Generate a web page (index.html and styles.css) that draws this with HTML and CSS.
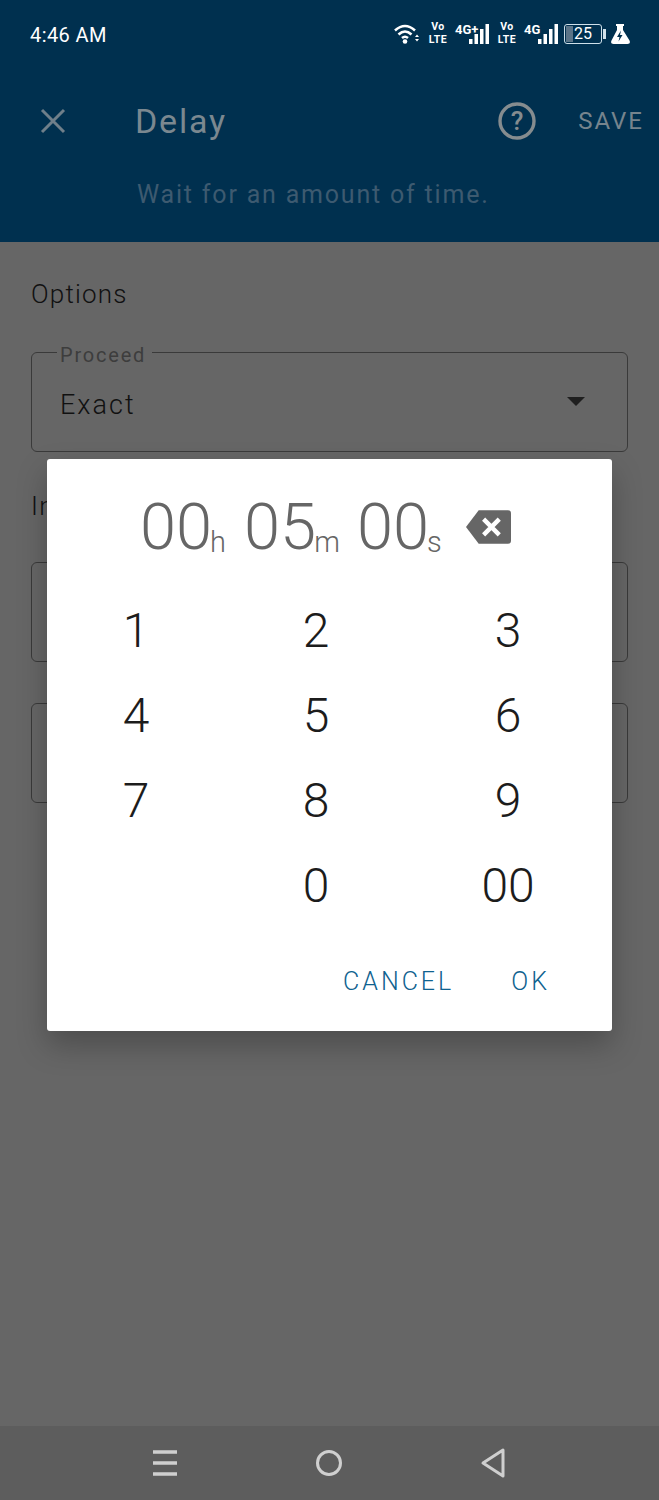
FILE: index.html
```html
<!DOCTYPE html>
<html lang="en">
<head>
  <meta charset="UTF-8" />
  <title>Delay</title>
  <link rel="stylesheet" href="styles.css">
</head>
<body>
  <div class="screen">
    <div class="appbar">
      <div class="status">
        <span class="clock">4:46 AM</span>
        <div class="status-icons">
          <svg width="26" height="20" viewBox="0 0 26 20"><g fill="none" stroke="#fff" stroke-width="2.600"><path d="M1 6.500 Q11 -2.500 21 6.500"/><path d="M4.500 10.500 Q11 4.500 17.500 10.500"/><path d="M8 14 Q11 11.500 14 14"/></g><circle cx="11" cy="17.500" r="2.300" fill="#fff"/><path d="M21 13h4l-2-2.500zM21 15h4l-2 2.500z" fill="#fff"/></svg>
          <span class="volte">Vo<br>LTE</span>
          <div class="net">
            <span class="net-label">4G+</span>
            <svg class="bars" width="20" height="20" viewBox="0 0 20 20"><path d="M0 15h3.500v5H0zM5.500 10H9v10H5.500zM11 5h3.500v15H11zM16.500 0H20v20h-3.500z" fill="#fff"/></svg>
          </div>
          <span class="volte">Vo<br>LTE</span>
          <div class="net">
            <span class="net-label">4G</span>
            <svg class="bars" width="20" height="20" viewBox="0 0 20 20"><path d="M0 15h3.500v5H0zM5.500 10H9v10H5.500zM11 5h3.500v15H11zM16.500 0H20v20h-3.500z" fill="#fff"/></svg>
          </div>
          <div class="battery"><span class="battery-level"></span><span class="battery-num">25</span></div>
          <span class="battery-tip"></span>
          <svg class="flask" width="20" height="20" viewBox="0 0 20 20"><path d="M6 0h8v2h-1v4l6.500 10.500q1.500 3.500-2 3.500H3.500q-3.500 0-2-3.500L7 6V2H6z" fill="#fff"/><path d="M11 6.500l-4 6.500h2.500l-1 4.500 4-6.500H10z" fill="#00304f"/></svg>
        </div>
      </div>
      <div class="toolbar">
        <svg class="close" width="28" height="28" viewBox="0 0 28 28"><path d="M3 3l22 22M25 3L3 25" stroke="#6f7f8a" stroke-width="3" fill="none"/></svg>
        <h1 class="title">Delay</h1>
        <svg class="help" width="40" height="40" viewBox="0 0 40 40"><circle cx="20" cy="20" r="17" fill="none" stroke="#858c8f" stroke-width="3.400"/><text x="20" y="29" text-anchor="middle" class="help-mark">?</text></svg>
        <span class="save">SAVE</span>
      </div>
      <p class="subtitle">Wait for an amount of time.</p>
    </div>

    <div class="content">
      <h2 class="section">Options</h2>
      <fieldset class="field field-first">
        <legend>Proceed</legend>
        <span class="field-value">Exact</span>
        <span class="caret"></span>
      </fieldset>
      <h2 class="section section-second">Input</h2>
      <fieldset class="field"></fieldset>
      <fieldset class="field field-last"></fieldset>
    </div>

    <div class="navbar">
      <svg width="28" height="28" viewBox="0 0 28 28"><path d="M2 3h24M2 14h24M2 25h24" stroke="#cfcfcf" stroke-width="3.400" fill="none"/></svg>
      <svg width="28" height="28" viewBox="0 0 28 28"><circle cx="14" cy="14" r="11.500" stroke="#cfcfcf" stroke-width="3" fill="none"/></svg>
      <svg width="28" height="32" viewBox="0 0 28 32"><path d="M24 3v26L4 16z" stroke="#cfcfcf" stroke-width="3" stroke-linejoin="round" fill="none"/></svg>
    </div>

    <div class="dialog">
      <div class="readout">
        <span class="digits">00</span><span class="unit unit-h">h</span>
        <span class="digits">05</span><span class="unit unit-m">m</span>
        <span class="digits">00</span><span class="unit unit-s">s</span>
        <svg class="backspace" width="45" height="34" viewBox="0 0 46 34"><path d="M13 0h30q3 0 3 3v28q0 3-3 3H13L0 17z" fill="#666"/><path d="M18 9l16 16M34 9L18 25" stroke="#fff" stroke-width="4.500" fill="none"/></svg>
      </div>
      <div class="keypad">
        <span class="key">1</span><span class="key">2</span><span class="key">3</span>
        <span class="key">4</span><span class="key">5</span><span class="key">6</span>
        <span class="key">7</span><span class="key">8</span><span class="key">9</span>
        <span class="key"></span><span class="key">0</span><span class="key">00</span>
      </div>
      <div class="actions">
        <span class="action">CANCEL</span>
        <span class="action">OK</span>
      </div>
    </div>
  </div>
</body>
</html>
```

FILE: styles.css
```css
html, body {
  margin: 0;
  padding: 0;
}
body {
  font-family: Roboto, "Liberation Sans", sans-serif;
  background-color: #666;
}
.screen {
  position: relative;
  display: flex;
  flex-direction: column;
  width: 659px;
  height: 1500px;
  overflow: hidden;
}

/* top area */
.appbar {
  height: 242px;
  flex-shrink: 0;
  background-color: #00304f;
  box-sizing: border-box;
}
.status {
  display: flex;
  justify-content: space-between;
  align-items: center;
  height: 68px;
  padding: 0 29px 0 30px;
  color: #fff;
}
.clock {
  margin-top: 1px;
  font-size: 20px;
  letter-spacing: 0.400px;
}
.status-icons {
  display: flex;
  align-items: center;
  gap: 7px;
  margin-top: -1px;
}
.volte {
  width: 20px;
  margin-left: 1px;
  font-size: 10.500px;
  line-height: 12.300px;
  font-weight: 700;
  letter-spacing: 0.500px;
  text-align: center;
}
.net {
  display: flex;
  align-items: flex-end;
  width: 34px;
}
.net-label {
  width: 14px;
  font-size: 13px;
  line-height: 12px;
  font-weight: 700;
  white-space: nowrap;
  align-self: flex-start;
}
.bars {
  margin-left: auto;
}
.battery {
  position: relative;
  box-sizing: border-box;
  width: 38px;
  height: 20px;
  margin-left: -1px;
  border: 1.500px solid #cfe0ea;
  border-radius: 3px;
  display: flex;
  align-items: center;
  justify-content: center;
}
.battery-level {
  position: absolute;
  left: 1px;
  top: 1px;
  bottom: 1px;
  width: 7px;
  background-color: #5b7488;
}
.battery-num {
  position: relative;
  font-size: 16px;
}
.battery-tip {
  width: 3px;
  height: 10px;
  margin-left: -6px;
  background-color: #cfe0ea;
}
.flask {
  margin-left: -3px;
}
.toolbar {
  display: flex;
  align-items: center;
  height: 50px;
  margin-top: 28px;
  padding-left: 39px;
}
.title {
  margin: 0 0 0 68px;
  flex: 1;
  font-size: 34px;
  font-weight: 400;
  letter-spacing: 1.800px;
  color: #7b8890;
}
.help-mark {
  font-family: Roboto, sans-serif;
  font-size: 26px;
  font-weight: 500;
  fill: #858c8f;
}
.save {
  margin: 0 15px 0 41px;
  font-size: 24px;
  letter-spacing: 2px;
  color: #76848d;
}
.subtitle {
  margin: 34px 0 0 137px;
  font-size: 25px;
  line-height: 30px;
  letter-spacing: 1.800px;
  color: #3d5a70;
}

/* form behind the dialog */
.content {
  flex: 1;
  padding: 0 31px;
}
.section {
  margin: 36px 0 0;
  font-size: 26px;
  line-height: 32px;
  font-weight: 300;
  letter-spacing: 1.200px;
  color: #111;
}
.section-second {
  margin-top: 38px;
}
.field {
  position: relative;
  box-sizing: border-box;
  height: 100px;
  margin: 41px 0 0;
  padding: 0 28px;
  border: 1.500px solid #3a3a3a;
  border-radius: 6px;
}
.field-first {
  height: 110px;
  margin-top: 32px;
}
.section-second + .field {
  margin-top: 40px;
}
.field legend {
  padding: 0 6px 0 3px;
  margin-left: -3px;
  font-size: 20px;
  line-height: 20px;
  letter-spacing: 1.800px;
  color: #3d3d3d;
  transform: translateY(3px);
}
.field-value {
  display: block;
  margin-top: 26px;
  font-size: 27px;
  line-height: 34px;
  font-weight: 300;
  letter-spacing: 2px;
  color: #111;
}
.caret {
  position: absolute;
  top: 35px;
  right: 42px;
  border-left: 9px solid transparent;
  border-right: 9px solid transparent;
  border-top: 9px solid #1f1f1f;
}

/* bottom bar */
.navbar {
  display: flex;
  justify-content: space-between;
  align-items: center;
  flex-shrink: 0;
  box-sizing: border-box;
  height: 74px;
  padding: 0 152px 0 151px;
  background-color: #5d5d5d;
}

/* time picker */
.dialog {
  position: absolute;
  left: 47px;
  top: 459px;
  width: 565px;
  height: 572px;
  background-color: #fff;
  border-radius: 3px;
  box-shadow: 0 14px 30px rgba(0, 0, 0, 0.25);
}
.readout {
  display: flex;
  align-items: baseline;
  height: 122px;
  padding-left: 93px;
  color: #666;
}
.digits {
  font-size: 65px;
  line-height: 137px;
  font-weight: 300;
}
.unit {
  font-size: 29px;
  font-weight: 300;
  transform: translateY(3px);
}
.unit-h {
  margin: 0 18px 0 -2px;
}
.unit-m {
  margin: 0 17px 0 -2px;
}
.unit-s {
  margin-left: -2px;
}
.backspace {
  align-self: flex-start;
  margin: 51px 0 0 24px;
}
.keypad {
  display: grid;
  grid-template-columns: 178px 182px 202px;
  grid-auto-rows: 85px;
  margin-top: 7px;
}
.key {
  display: flex;
  align-items: center;
  justify-content: center;
  font-size: 48px;
  font-weight: 300;
  color: #1c1c1c;
}
.actions {
  display: flex;
  justify-content: flex-end;
  gap: 57px;
  margin-top: 39px;
  padding-right: 62px;
}
.action {
  font-size: 25px;
  line-height: 30px;
  font-weight: 300;
  letter-spacing: 3px;
  color: #0f628f;
}
```
